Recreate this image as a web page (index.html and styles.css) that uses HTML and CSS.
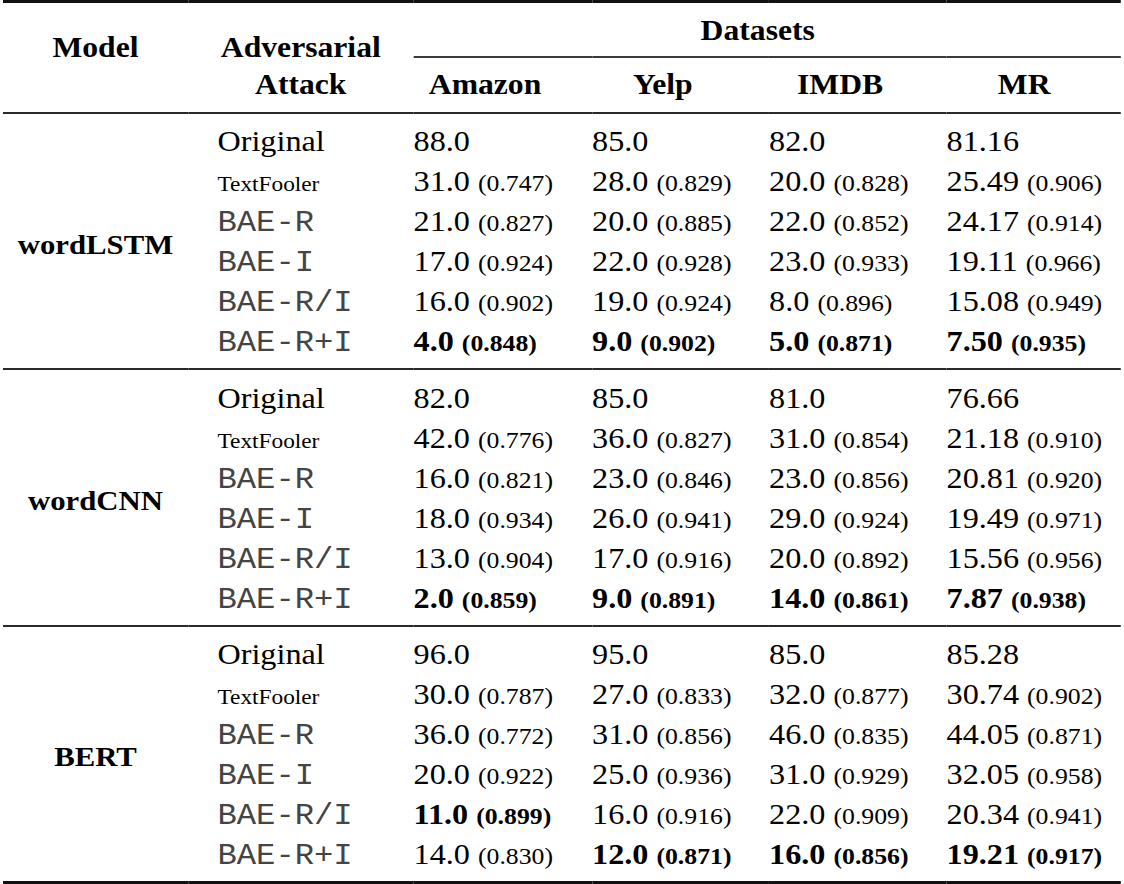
FILE: index.html
```html
<!DOCTYPE html>
<html lang="en">
<head>
<meta charset="utf-8">
<title>Adversarial attack results</title>
<link rel="stylesheet" href="styles.css">
</head>
<body>
<div class="figure">
<table class="results">
  <colgroup>
    <col class="c-model"><col class="c-attack"><col class="c-amazon"><col class="c-yelp"><col class="c-imdb"><col class="c-mr">
  </colgroup>
  <thead>
    <tr class="h1">
      <th rowspan="2" class="h-model">Model</th>
      <th rowspan="2" class="h-attack">Adversarial<br>Attack</th>
      <th colspan="4" class="h-datasets">Datasets</th>
    </tr>
    <tr class="h2">
      <th class="h-ds">Amazon</th>
      <th class="h-ds">Yelp</th>
      <th class="h-ds">IMDB</th>
      <th class="h-ds h-last">MR</th>
    </tr>
  </thead>
  <tbody class="group">
    <tr><td rowspan="6" class="model">wordLSTM</td><td class="attack">Original</td><td>88.0</td><td>85.0</td><td>82.0</td><td>81.16</td></tr>
    <tr><td class="attack"><span class="tf">TextFooler</span></td><td>31.0 <span class="s">(0.747)</span></td><td>28.0 <span class="s">(0.829)</span></td><td>20.0 <span class="s">(0.828)</span></td><td>25.49 <span class="s">(0.906)</span></td></tr>
    <tr><td class="attack"><span class="mono">BAE-R</span></td><td>21.0 <span class="s">(0.827)</span></td><td>20.0 <span class="s">(0.885)</span></td><td>22.0 <span class="s">(0.852)</span></td><td>24.17 <span class="s">(0.914)</span></td></tr>
    <tr><td class="attack"><span class="mono">BAE-I</span></td><td>17.0 <span class="s">(0.924)</span></td><td>22.0 <span class="s">(0.928)</span></td><td>23.0 <span class="s">(0.933)</span></td><td>19.11 <span class="s">(0.966)</span></td></tr>
    <tr><td class="attack"><span class="mono">BAE-R/I</span></td><td>16.0 <span class="s">(0.902)</span></td><td>19.0 <span class="s">(0.924)</span></td><td>8.0 <span class="s">(0.896)</span></td><td>15.08 <span class="s">(0.949)</span></td></tr>
    <tr><td class="attack"><span class="mono">BAE-R+I</span></td><td class="b">4.0 <span class="s">(0.848)</span></td><td class="b">9.0 <span class="s">(0.902)</span></td><td class="b">5.0 <span class="s">(0.871)</span></td><td class="b">7.50 <span class="s">(0.935)</span></td></tr>
  </tbody>
  <tbody class="group">
    <tr><td rowspan="6" class="model">wordCNN</td><td class="attack">Original</td><td>82.0</td><td>85.0</td><td>81.0</td><td>76.66</td></tr>
    <tr><td class="attack"><span class="tf">TextFooler</span></td><td>42.0 <span class="s">(0.776)</span></td><td>36.0 <span class="s">(0.827)</span></td><td>31.0 <span class="s">(0.854)</span></td><td>21.18 <span class="s">(0.910)</span></td></tr>
    <tr><td class="attack"><span class="mono">BAE-R</span></td><td>16.0 <span class="s">(0.821)</span></td><td>23.0 <span class="s">(0.846)</span></td><td>23.0 <span class="s">(0.856)</span></td><td>20.81 <span class="s">(0.920)</span></td></tr>
    <tr><td class="attack"><span class="mono">BAE-I</span></td><td>18.0 <span class="s">(0.934)</span></td><td>26.0 <span class="s">(0.941)</span></td><td>29.0 <span class="s">(0.924)</span></td><td>19.49 <span class="s">(0.971)</span></td></tr>
    <tr><td class="attack"><span class="mono">BAE-R/I</span></td><td>13.0 <span class="s">(0.904)</span></td><td>17.0 <span class="s">(0.916)</span></td><td>20.0 <span class="s">(0.892)</span></td><td>15.56 <span class="s">(0.956)</span></td></tr>
    <tr><td class="attack"><span class="mono">BAE-R+I</span></td><td class="b">2.0 <span class="s">(0.859)</span></td><td class="b">9.0 <span class="s">(0.891)</span></td><td class="b">14.0 <span class="s">(0.861)</span></td><td class="b">7.87 <span class="s">(0.938)</span></td></tr>
  </tbody>
  <tbody class="group last">
    <tr><td rowspan="6" class="model">BERT</td><td class="attack">Original</td><td>96.0</td><td>95.0</td><td>85.0</td><td>85.28</td></tr>
    <tr><td class="attack"><span class="tf">TextFooler</span></td><td>30.0 <span class="s">(0.787)</span></td><td>27.0 <span class="s">(0.833)</span></td><td>32.0 <span class="s">(0.877)</span></td><td>30.74 <span class="s">(0.902)</span></td></tr>
    <tr><td class="attack"><span class="mono">BAE-R</span></td><td>36.0 <span class="s">(0.772)</span></td><td>31.0 <span class="s">(0.856)</span></td><td>46.0 <span class="s">(0.835)</span></td><td>44.05 <span class="s">(0.871)</span></td></tr>
    <tr><td class="attack"><span class="mono">BAE-I</span></td><td>20.0 <span class="s">(0.922)</span></td><td>25.0 <span class="s">(0.936)</span></td><td>31.0 <span class="s">(0.929)</span></td><td>32.05 <span class="s">(0.958)</span></td></tr>
    <tr><td class="attack"><span class="mono">BAE-R/I</span></td><td class="b">11.0 <span class="s">(0.899)</span></td><td>16.0 <span class="s">(0.916)</span></td><td>22.0 <span class="s">(0.909)</span></td><td>20.34 <span class="s">(0.941)</span></td></tr>
    <tr><td class="attack"><span class="mono">BAE-R+I</span></td><td>14.0 <span class="s">(0.830)</span></td><td class="b">12.0 <span class="s">(0.871)</span></td><td class="b">16.0 <span class="s">(0.856)</span></td><td class="b">19.21 <span class="s">(0.917)</span></td></tr>
  </tbody>
</table>
</div>
</body>
</html>
```

FILE: styles.css
```css
html, body {
  margin: 0;
  padding: 0;
  background: #ffffff;
}

body {
  font-family: "Liberation Serif", "Times New Roman", serif;
  color: #000000;
}

.figure {
  margin-left: 3px;
  width: 1007px;
  transform: scaleX(1.11);
  transform-origin: 0 0;
}

.results {
  width: 1007px;
  border-collapse: collapse;
  table-layout: fixed;
  font-size: 29px;
}

.c-model { width: 166.7px; }
.c-attack { width: 203.2px; }
.c-amazon { width: 160.8px; }
.c-yelp { width: 159.5px; }
.c-imdb { width: 159.9px; }
.c-mr { width: 156.9px; }

.results th,
.results td {
  padding: 0;
  white-space: nowrap;
}

/* Header */
.results thead {
  border-top: 3px solid #111111;
  border-bottom: 2px solid #2a2a2a;
}

.results th {
  font-size: 28.5px;
  font-weight: bold;
  line-height: 37px;
  text-align: center;
}

.h1 th.h-datasets {
  padding: 8.5px 17px 7.2px 0;
  border-bottom: 2px solid #3a3a3a;
}

.h2 th {
  padding: 8.6px 32px 8.7px 0;
}

.h2 th.h-last {
  padding-right: 17px;
}

.results th.h-model {
  vertical-align: bottom;
  padding-bottom: 45.7px;
}

.results th.h-attack {
  vertical-align: bottom;
  padding-bottom: 8.7px;
}

/* Body */
.group {
  border-bottom: 2px solid #2a2a2a;
}

.group.last {
  border-bottom: 3px solid #111111;
}

.results td {
  line-height: 40px;
  text-align: left;
  vertical-align: middle;
}

.group tr:first-child td {
  padding-top: 7.5px;
}

.group tr:last-child td {
  padding-bottom: 6.8px;
}

.results td.model {
  padding: 0;
  text-align: center;
  font-size: 27.7px;
  font-weight: bold;
}

.results td.attack {
  padding-left: 26.5px;
}

.tf {
  font-size: 21px;
  line-height: 1;
}

.mono {
  font-family: "Liberation Mono", "Courier New", monospace;
  font-size: 29px;
  line-height: 1;
  color: #444444;
}

.s {
  font-size: 23.2px;
  line-height: 1;
}

.b {
  font-weight: bold;
}
```
